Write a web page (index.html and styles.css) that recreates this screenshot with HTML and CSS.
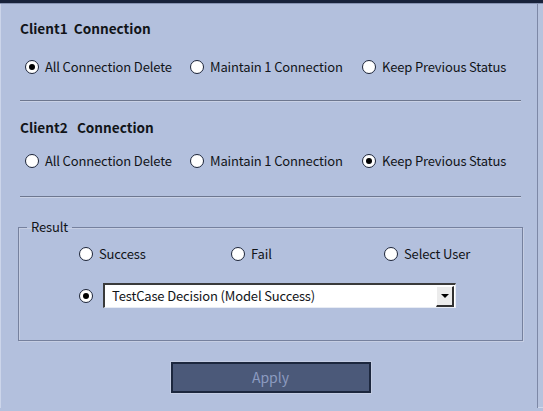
FILE: index.html
```html
<!DOCTYPE html>
<html>
<head>
<meta charset="utf-8">
<link rel="stylesheet" href="styles.css">
</head>
<body>
<div class="window">
  <div class="panel">
    <div class="title">Client1  Connection</div>
    <div class="row conn">
      <label class="opt w1"><span class="radio checked"></span><span class="lbl">All Connection Delete</span></label>
      <label class="opt w2"><span class="radio"></span><span class="lbl">Maintain 1 Connection</span></label>
      <label class="opt"><span class="radio"></span><span class="lbl">Keep Previous Status</span></label>
    </div>
    <div class="sep sep1"></div>
    <div class="title t2">Client2   Connection</div>
    <div class="row conn r2">
      <label class="opt w1"><span class="radio"></span><span class="lbl">All Connection Delete</span></label>
      <label class="opt w2"><span class="radio"></span><span class="lbl">Maintain 1 Connection</span></label>
      <label class="opt"><span class="radio checked"></span><span class="lbl">Keep Previous Status</span></label>
    </div>
    <div class="sep sep2"></div>
    <fieldset class="group">
      <legend class="legend">Result</legend>
      <div class="group-body">
        <div class="row res">
          <label class="opt g1"><span class="radio"></span><span class="lbl">Success</span></label>
          <label class="opt g2"><span class="radio"></span><span class="lbl">Fail</span></label>
          <label class="opt"><span class="radio"></span><span class="lbl">Select User</span></label>
        </div>
        <div class="row combo-row">
          <span class="radio checked"></span>
          <div class="combo">
            <span class="combo-text">TestCase Decision (Model Success)</span>
            <span class="combo-btn"><span class="tri"></span></span>
          </div>
        </div>
      </div>
    </fieldset>
    <div class="actions">
      <button class="apply">Apply</button>
    </div>
  </div>
</div>
</body>
</html>
```
FILE: styles.css
```css
html, body {
  margin: 0;
  padding: 0;
  background: #b3c0dd;
}
body {
  width: 543px;
  height: 411px;
  overflow: hidden;
  font-family: "Noto Sans CJK KR", "Noto Sans", sans-serif;
  font-size: 13px;
  letter-spacing: -0.15px;
  color: #111418;
}
.window {
  box-sizing: border-box;
  width: 543px;
  height: 411px;
  border-top: 3px solid #18223a;
  background: #b7c3de;
  display: flex;
  box-shadow: inset 0 1px 0 #8793b2, inset 0 -3px 0 #b3c0dd, inset 0 -4px 0 #d0d8ea;
}
.panel {
  box-sizing: border-box;
  width: 538px;
  height: 404px;
  margin-top: 1px;
  background: #b3c0dd;
  border-left: 1px solid #ccd5ea;
  border-right: 1px solid #7d88a6;
  padding: 16px 16px 0 19px;
  display: flex;
  flex-direction: column;
}
.title {
  font-weight: bold;
  font-size: 13.6px;
  letter-spacing: 0;
  line-height: 16px;
  height: 16px;
  white-space: pre;
}
.row {
  display: flex;
  align-items: center;
}
.conn {
  margin-top: 23px;
  height: 16px;
  padding-left: 5px;
}
.r2 { margin-top: 18px; }
.t2 { margin-top: 18px; }
.opt {
  display: flex;
  align-items: center;
  line-height: 16px;
  white-space: nowrap;
}
.w1 { width: 165px; }
.w2 { width: 172px; }
.lbl { margin-left: 6px; }
.radio {
  box-sizing: border-box;
  width: 14px;
  height: 14px;
  border-radius: 50%;
  border: 1.5px solid #1c2438;
  background: #ffffff;
  flex: none;
  display: flex;
  align-items: center;
  justify-content: center;
}
.radio.checked::after {
  content: "";
  width: 6px;
  height: 6px;
  border-radius: 50%;
  background: #000000;
}
.sep {
  width: 501px;
  height: 1px;
  background: #6d778f;
  box-shadow: 0 1px 0 #c9d1e5;
  flex: none;
}
.sep1 { margin-top: 25px; }
.sep2 { margin-top: 27px; }
.group {
  box-sizing: border-box;
  width: 505px;
  margin: 22px 0 0 -2px;
  padding: 0;
  border: 1px solid #76819e;
  box-shadow: inset 1px 1px 0 #c6cee3, 1px 1px 0 #c6cee3;
  min-width: 0;
}
.legend {
  margin-left: 8px;
  padding: 0 4px;
  line-height: 16px;
}
.group-body {
  padding: 0 0 32px 60px;
}
.res {
  margin-top: 11px;
  height: 16px;
}
.g1 { width: 152px; }
.g2 { width: 153px; }
.combo-row {
  margin-top: 21px;
}
.combo {
  box-sizing: border-box;
  margin-left: 10px;
  width: 353px;
  height: 25px;
  background: #ffffff;
  border-top: 2px solid #3a3a3a;
  border-left: 2px solid #3a3a3a;
  border-right: 1px solid #e8ecf4;
  border-bottom: 1px solid #e8ecf4;
  display: flex;
  align-items: center;
  justify-content: space-between;
  padding-left: 7px;
}
.combo-text {
  line-height: 16px;
  white-space: nowrap;
}
.combo-btn {
  box-sizing: border-box;
  width: 18px;
  height: 21px;
  margin-right: 1px;
  background: #ececec;
  border-top: 1px solid #ffffff;
  border-left: 1px solid #ffffff;
  border-right: 2px solid #303030;
  border-bottom: 2px solid #303030;
  display: flex;
  align-items: center;
  justify-content: center;
}
.tri {
  width: 0;
  height: 0;
  border-left: 4px solid transparent;
  border-right: 4px solid transparent;
  border-top: 4px solid #000000;
}
.actions {
  display: flex;
  justify-content: center;
  margin-top: 21px;
  width: 501px;
}
.apply {
  box-sizing: border-box;
  width: 200px;
  height: 31px;
  background: #4b5979;
  border: 2px solid #1c273e;
  color: #8c9bc0;
  font-family: "Noto Sans CJK KR", "Noto Sans", sans-serif;
  font-size: 14px;
  padding: 0 0 2px;
  box-shadow: 0 0 0 1px #c3cce2;
}
```
